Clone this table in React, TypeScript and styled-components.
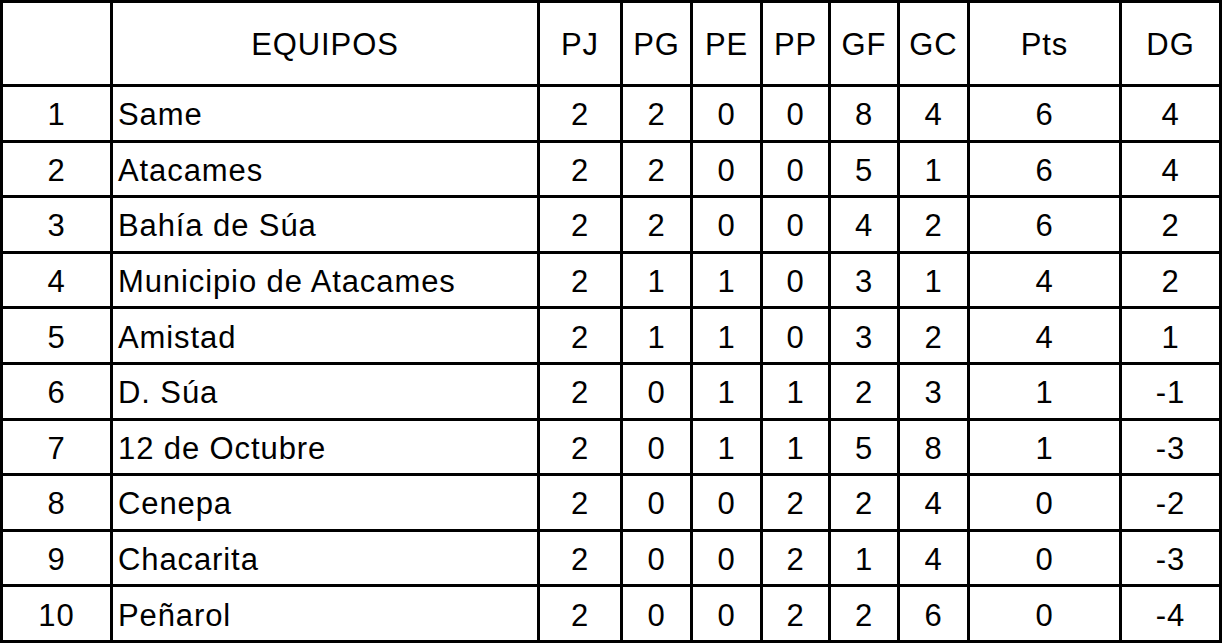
import React from "react";
import styled, { createGlobalStyle } from "styled-components";

const GlobalStyle = createGlobalStyle`
  html, body {
    margin: 0;
    padding: 0;
    background: #ffffff;
  }
  body {
    font-family: "Liberation Sans", Arial, sans-serif;
  }
`;

const Grid = styled.div`
  display: grid;
  grid-template-columns: 107px 424px 80px 67px 67px 65px 66px 67px 149px 97px;
  grid-template-rows: 81px repeat(10, 52.6px);
  gap: 3px;
  padding: 3px;
  width: 1222px;
  height: 643px;
  box-sizing: border-box;
  background: #000000;
`;

const Cell = styled.div<{ $align?: "left" | "center" }>`
  background: #ffffff;
  display: flex;
  align-items: center;
  justify-content: ${(p) => (p.$align === "left" ? "flex-start" : "center")};
  padding-left: ${(p) => (p.$align === "left" ? "5px" : "0")};
  padding-top: 4px;
  box-sizing: border-box;
  font-size: 31px;
  letter-spacing: 0.9px;
  color: #000000;
  white-space: nowrap;
  overflow: hidden;
`;

const HeaderCell = styled(Cell)`
  padding-top: 2px;
`;

const headers = ["", "EQUIPOS", "PJ", "PG", "PE", "PP", "GF", "GC", "Pts", "DG"];

const rows: (string | number)[][] = [
  [1, "Same", 2, 2, 0, 0, 8, 4, 6, 4],
  [2, "Atacames", 2, 2, 0, 0, 5, 1, 6, 4],
  [3, "Bahía de Súa", 2, 2, 0, 0, 4, 2, 6, 2],
  [4, "Municipio de Atacames", 2, 1, 1, 0, 3, 1, 4, 2],
  [5, "Amistad", 2, 1, 1, 0, 3, 2, 4, 1],
  [6, "D. Súa", 2, 0, 1, 1, 2, 3, 1, -1],
  [7, "12 de Octubre", 2, 0, 1, 1, 5, 8, 1, -3],
  [8, "Cenepa", 2, 0, 0, 2, 2, 4, 0, -2],
  [9, "Chacarita", 2, 0, 0, 2, 1, 4, 0, -3],
  [10, "Peñarol", 2, 0, 0, 2, 2, 6, 0, -4],
];

export default function App() {
  return (
    <>
      <GlobalStyle />
      <Grid>
        {headers.map((h, i) => (
          <HeaderCell key={`h${i}`}>{h}</HeaderCell>
        ))}
        {rows.map((r, ri) =>
          r.map((v, ci) => (
            <Cell key={`${ri}-${ci}`} $align={ci === 1 ? "left" : "center"}>
              {String(v)}
            </Cell>
          ))
        )}
      </Grid>
    </>
  );
}
